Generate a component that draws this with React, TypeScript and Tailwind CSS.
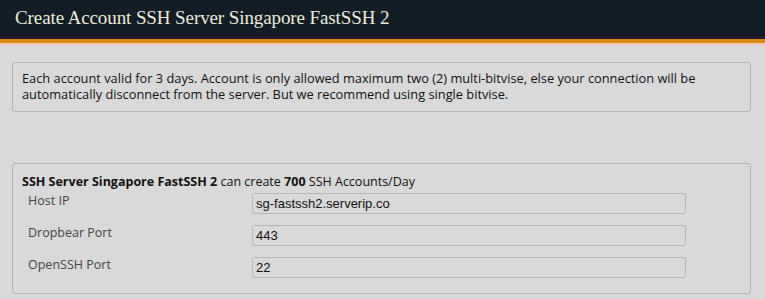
import React from "react";

export default function App() {
  const rows = [
    { label: "Host IP", value: "sg-fastssh2.serverip.co" },
    { label: "Dropbear Port", value: "443" },
    { label: "OpenSSH Port", value: "22" },
  ];
  return (
    <div className="w-[765px] h-[299px] bg-[#d9d9d9] overflow-hidden" style={{ fontFamily: "'Open Sans', sans-serif" }}>
      <div className="h-[36px] bg-[#121d25] flex items-center pl-[15px]">
        <h1 className="text-[19px] text-[#ecebdc] tracking-[-0.1px]" style={{ fontFamily: "'Liberation Serif', serif" }}>
          Create Account SSH Server Singapore FastSSH 2
        </h1>
      </div>
      <div className="h-[3px] bg-[#2a1a2e]" />
      <div className="h-[4px] bg-[#d78c14]" />
      <div className="h-[2px] bg-[#f1c6b6]" />
      <div className="px-[12px] pt-[17px]">
        <div className="w-[739px] border border-[#b4b4b4] rounded-[3px] px-[9px] pt-[7px] pb-[9px] text-[12.8px] leading-[16px] text-[#111]">
          Each account valid for 3 days. Account is only allowed maximum two (2) multi-bitvise, else your connection will be automatically disconnect from the server. But we recommend using single bitvise.
        </div>
        <div className="h-[51px]" />
        <div className="w-[739px] h-[131px] border border-[#b4b4b4] rounded-[3px] pl-[9px] pt-[9px] text-[12.5px] text-[#111]">
          <div className="leading-[17px]">
            <b>SSH Server Singapore FastSSH 2</b> can create <b>700</b> SSH Accounts/Day
          </div>
          <div className="flex flex-col gap-[11px] mt-[3px]">
            {rows.map((r) => (
              <div key={r.label} className="flex items-start h-[21px]">
                <div className="w-[230px] pl-[6px] -mt-[1px] text-[#444]">{r.label}</div>
                <div
                  className="w-[434px] h-[21px] border border-[#b8b8b8] rounded-[2px] pl-[3px] flex items-center text-[13px] text-[#111]"
                  style={{ fontFamily: "'Liberation Sans', Arial, sans-serif" }}
                >
                  {r.value}
                </div>
              </div>
            ))}
          </div>
        </div>
      </div>
    </div>
  );
}
